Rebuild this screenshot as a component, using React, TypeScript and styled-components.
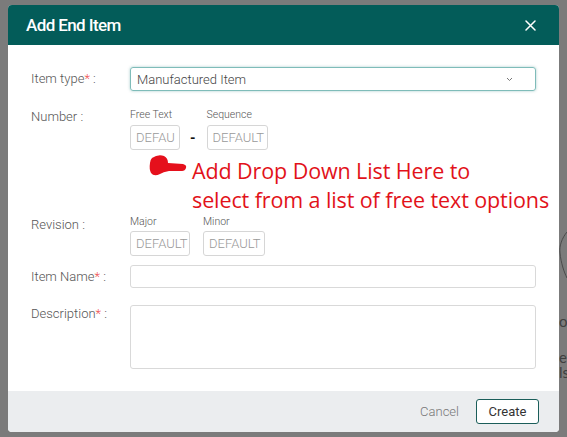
import React from 'react';
import styled, { createGlobalStyle } from 'styled-components';

const GlobalStyle = createGlobalStyle`
  html, body {
    margin: 0;
    padding: 0;
    background: #7b7b7b;
    font-family: Roboto, "Liberation Sans", Arial, sans-serif;
  }
`;

const Page = styled.div`
  position: relative;
  width: 567px;
  height: 437px;
  overflow: hidden;
  background: #7b7b7b;
  padding: 5px 0 0 8px;
  box-sizing: border-box;
`;

// faded page content peeking out behind the dialog
const Behind = styled.div`
  position: absolute;
  left: 559px;
  top: 228px;
  font-family: Lato, "Liberation Sans", sans-serif;
  font-size: 15px;
  line-height: 15px;
  color: #3f3f3f;

  svg {
    display: block;
    margin-bottom: 34px;
  }
  p {
    margin: 0;
  }
  p.spaced {
    margin-bottom: 21px;
  }
`;

const Modal = styled.div`
  position: relative;
  width: 551px;
  height: 427px;
  background: #fff;
  border-radius: 4px;
  overflow: hidden;
  display: flex;
  flex-direction: column;
`;

const Header = styled.div`
  height: 40px;
  flex: 0 0 40px;
  background: #035c59;
  display: flex;
  align-items: center;
  justify-content: space-between;
  padding: 0 23px 0 18px;
`;

const Title = styled.h2`
  margin: 0;
  font-size: 17px;
  font-weight: 500;
  color: #fff;
  letter-spacing: -0.6px;
`;

const Body = styled.div`
  flex: 1;
  padding: 22px 23px 0 23px;
  display: flex;
  flex-direction: column;
`;

const Row = styled.div<{ $top: number; $align?: string }>`
  display: flex;
  align-items: ${p => p.$align || 'center'};
  margin-top: ${p => p.$top}px;
`;

const Label = styled.div<{ $pad?: number }>`
  width: 99px;
  flex: 0 0 99px;
  font-size: 13px;
  font-weight: 300;
  color: #555;
  line-height: 18px;
  padding-top: ${p => p.$pad || 0}px;
`;

const Req = styled.span`
  color: #ef4f4f;
`;

const Select = styled.div`
  flex: 1;
  height: 24px;
  box-sizing: border-box;
  border: 1px solid #7fbcb9;
  border-radius: 3px;
  box-shadow: 0 0 3px rgba(0, 110, 105, 0.35);
  display: flex;
  align-items: center;
  justify-content: space-between;
  padding: 0 22px 0 6px;
  font-size: 13px;
  font-weight: 300;
  color: #444;
`;

const Input = styled.div<{ $h: number }>`
  flex: 1;
  height: ${p => p.$h}px;
  box-sizing: border-box;
  border: 1px solid #d9d9d9;
  border-radius: 3px;
`;

const Fields = styled.div`
  display: flex;
  align-items: flex-end;
`;

const Field = styled.div<{ $gap: number }>`
  display: flex;
  flex-direction: column;
  margin-right: ${p => p.$gap}px;
`;

const SubLabel = styled.div<{ $mb: number }>`
  font-size: 10.5px;
  font-weight: 300;
  color: #555;
  line-height: 13px;
  margin-bottom: ${p => p.$mb}px;
`;

const SmallBox = styled.div<{ $w: number; $h: number }>`
  width: ${p => p.$w}px;
  height: ${p => p.$h}px;
  box-sizing: border-box;
  border: 1px solid #d6d6d6;
  border-radius: 3px;
  padding: 0 5px;
  overflow: hidden;
  white-space: nowrap;
  display: flex;
  align-items: center;
  font-size: 13px;
  font-weight: 300;
  color: #999;
`;

const Dash = styled.div`
  font-size: 14px;
  font-weight: 700;
  color: #111;
  margin: 0 11px 4px 0;
  align-self: flex-end;
`;

const Note = styled.div`
  display: flex;
  align-items: flex-start;
  margin: 2px 0 0 116px;
  height: 62px;
`;

const NoteText = styled.div`
  font-family: "Open Sans", "Liberation Sans", sans-serif;
  font-size: 21.5px;
  line-height: 29px;
  color: #e2121a;
  letter-spacing: -0.1px;
  white-space: nowrap;
  margin-left: 3px;
  margin-top: 4px;
`;

const Footer = styled.div`
  flex: 0 0 41px;
  height: 41px;
  background: #ebedef;
  display: flex;
  align-items: center;
  justify-content: flex-end;
  padding: 0 20px 0 0;
`;

const TextButton = styled.button`
  border: none;
  background: none;
  font-family: inherit;
  font-size: 13px;
  font-weight: 300;
  color: #777;
  margin-right: 17px;
  padding: 0;
`;

const OutlineButton = styled.button`
  width: 63px;
  height: 25px;
  border: 1px solid #1b5e5a;
  border-radius: 3px;
  background: #fff;
  font-family: inherit;
  font-size: 13px;
  color: #333;
  padding: 0;
`;

const Close = () => (
  <svg width="11" height="11" viewBox="0 0 11 11">
    <path d="M1 1L10 10M10 1L1 10" stroke="#fff" strokeWidth="1.5" strokeLinecap="round" />
  </svg>
);

const Chevron = () => (
  <svg width="7" height="5" viewBox="0 0 7 5">
    <path d="M1 1L3.5 3.5L6 1" stroke="#777" strokeWidth="1" fill="none" />
  </svg>
);

// hand-drawn red marker arrow
const Arrow = () => (
  <svg width="42" height="26" viewBox="0 0 42 26" style={{ flex: '0 0 42px' }}>
    <path
      d="M5 6Q11 2 17 4Q21 6 21 11L36 12Q40 13 39 16Q38 19 35 19L22 19Q16 20 13 22Q7 25 4 21Q2 17 3 11Q3 8 5 6Z"
      fill="#e5101c"
    />
  </svg>
);

const BehindCurve = () => (
  <svg width="8" height="52" viewBox="0 0 8 52">
    <path d="M8 4C3 10 0 18 1 25C2 35 5 44 8 50" stroke="#4a4a4a" strokeWidth="1" fill="none" />
  </svg>
);

export default function App() {
  return (
    <Page>
      <GlobalStyle />
      <Behind>
        <BehindCurve />
        <p className="spaced">o</p>
        <p>ev</p>
        <p>ls</p>
      </Behind>
      <Modal>
        <Header>
          <Title>Add End Item</Title>
          <Close />
        </Header>
        <Body>
          <Row $top={0}>
            <Label>
              Item type<Req>*</Req> :
            </Label>
            <Select>
              Manufactured Item
              <Chevron />
            </Select>
          </Row>
          <Row $top={17} $align="flex-start">
            <Label>Number :</Label>
            <Fields>
              <Field $gap={10}>
                <SubLabel $mb={4}>Free Text</SubLabel>
                <SmallBox $w={50} $h={25}>DEFAU</SmallBox>
              </Field>
              <Dash>-</Dash>
              <Field $gap={0}>
                <SubLabel $mb={4}>Sequence</SubLabel>
                <SmallBox $w={61} $h={25}>DEFAULT</SmallBox>
              </Field>
            </Fields>
          </Row>
          <Note>
            <Arrow />
            <NoteText>
              Add Drop Down List Here to
              <br />
              select from a list of free text options
            </NoteText>
          </Note>
          <Row $top={1} $align="flex-start">
            <Label $pad={1}>Revision :</Label>
            <Fields>
              <Field $gap={13}>
                <SubLabel $mb={3}>Major</SubLabel>
                <SmallBox $w={60} $h={25}>DEFAULT</SmallBox>
              </Field>
              <Field $gap={0}>
                <SubLabel $mb={3}>Minor</SubLabel>
                <SmallBox $w={62} $h={25}>DEFAULT</SmallBox>
              </Field>
            </Fields>
          </Row>
          <Row $top={9}>
            <Label>
              Item Name<Req>*</Req> :
            </Label>
            <Input $h={23} />
          </Row>
          <Row $top={17} $align="flex-start">
            <Label>
              Description<Req>*</Req> :
            </Label>
            <Input $h={64} />
          </Row>
        </Body>
        <Footer>
          <TextButton>Cancel</TextButton>
          <OutlineButton>Create</OutlineButton>
        </Footer>
      </Modal>
    </Page>
  );
}
